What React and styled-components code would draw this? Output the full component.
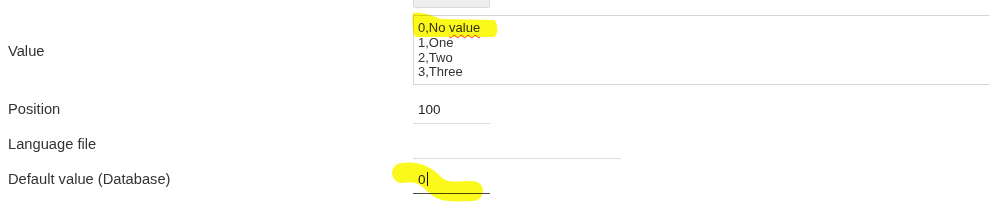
import React from "react";
import styled, { createGlobalStyle } from "styled-components";

const GlobalStyle = createGlobalStyle`
  html, body {
    margin: 0;
    padding: 0;
    background: #fff;
    overflow: hidden;
  }
  body {
    font-family: "Liberation Sans", Arial, sans-serif;
    font-size: 13px;
    color: #333;
  }
`;

const Page = styled.div`
  position: relative;
  width: 989px;
  height: 204px;
  overflow: hidden;
`;

const Form = styled.div`
  display: flex;
  flex-direction: column;
  gap: 6px;
`;

const Row = styled.div`
  display: flex;
  align-items: center;
  margin-top: ${(p) => p.$top || 0}px;
`;

const Label = styled.div`
  width: 405px;
  padding-left: 8px;
  flex-shrink: 0;
  font-size: 14.7px;
  line-height: 17px;
  color: #333;
  padding-top: ${(p) => p.$shift || 0}px;
`;

const TopButton = styled.div`
  width: 77px;
  height: 8px;
  box-sizing: border-box;
  background: #eeeeee;
  border: 1px solid #dcdcdc;
  border-top: none;
  border-radius: 0 0 2px 2px;
`;

const TextArea = styled.div`
  width: 620px;
  height: 70px;
  box-sizing: border-box;
  border: 1px solid #d6d6d6;
  padding: 5px 4px 0;
  line-height: 14.8px;
  color: #333;
  flex-shrink: 0;
`;

const Misspelled = styled.span`
  text-decoration: underline wavy #e33;
  text-decoration-thickness: 1px;
  text-underline-offset: 2px;
  text-decoration-skip-ink: none;
`;

const Field = styled.div`
  width: ${(p) => p.$width}px;
  height: 29px;
  box-sizing: border-box;
  padding: 0 5px;
  display: flex;
  align-items: center;
  border-bottom: 1px solid ${(p) => (p.$focused ? "#4a4a4a" : "#dddddd")};
  font-size: 13.5px;
  color: #222;
`;

const Caret = styled.span`
  display: inline-block;
  width: 1px;
  height: 14px;
  background: #111;
  margin-left: 1px;
`;

const Marker = styled.svg`
  position: absolute;
  left: 0;
  top: 0;
  pointer-events: none;
  mix-blend-mode: multiply;
`;

function App() {
  return (
    <Page>
      <GlobalStyle />
      <Form>
        <Row>
          <Label />
          <TopButton />
        </Row>
        <Row $top={1}>
          <Label $shift={3}>Value</Label>
          <TextArea>
            <div>
              0,No <Misspelled>value</Misspelled>
            </div>
            <div>1,One</div>
            <div>2,Two</div>
            <div>3,Three</div>
          </TextArea>
        </Row>
        <Row $top={4}>
          <Label>Position</Label>
          <Field $width={77}>100</Field>
        </Row>
        <Row>
          <Label>Language file</Label>
          <Field $width={208} />
        </Row>
        <Row>
          <Label>Default value (Database)</Label>
          <Field $width={77} $focused>
            0<Caret />
          </Field>
        </Row>
      </Form>
      <Marker width="989" height="204" viewBox="0 0 989 204">
        <path
          d="M413 13 C420 12, 430 14, 440 19 L494 20 C498 22, 499 35, 494 37 L416 37 C412 35, 412 18, 413 13 Z"
          fill="#fbf81c"
        />
        <path
          d="M402 173 C414 171, 424 173, 434 184 C442 193, 455 192, 473 191"
          fill="none"
          stroke="#fbf81c"
          strokeWidth="20"
          strokeLinecap="round"
        />
      </Marker>
    </Page>
  );
}

export default App;
